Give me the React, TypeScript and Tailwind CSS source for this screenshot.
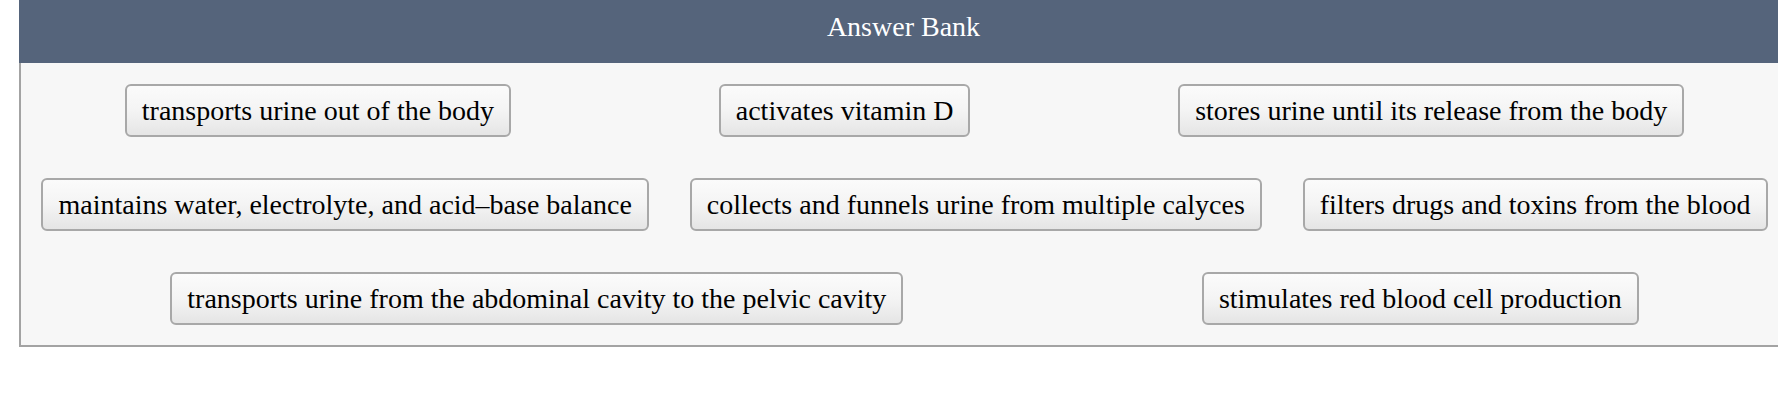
const rows: string[][] = [
  [
    "transports urine out of the body",
    "activates vitamin D",
    "stores urine until its release from the body",
  ],
  [
    "maintains water, electrolyte, and acid–base balance",
    "collects and funnels urine from multiple calyces",
    "filters drugs and toxins from the blood",
  ],
  [
    "transports urine from the abdominal cavity to the pelvic cavity",
    "stimulates red blood cell production",
  ],
];

function AnswerChip({ label }: { label: string }) {
  return (
    <div
      className="
        mx-[20px] h-[53px] px-[15px]
        flex items-center whitespace-nowrap
        border-2 border-[#a8a8a8] rounded-[6px]
        bg-linear-to-b from-[#fbfbfb] via-[#f4f4f4] to-[#e5e5e5]
        text-black text-[28px] leading-none
      "
    >
      {label}
    </div>
  );
}

export default function App() {
  return (
    <div className="w-[1778px] h-[404px] overflow-hidden bg-white font-['Liberation_Serif','Times_New_Roman',serif]">
      <div className="ml-[19px] w-[1771px] border-2 border-t-0 border-[#a3a3a3] bg-[#f7f7f7]">
        {/* header */}
        <div className="h-[63px] pb-[9px] flex items-center justify-center bg-[#55647b] text-white text-[28px] -ml-[2px]">
          Answer Bank
        </div>

        <div className="flex flex-col gap-[41px] pt-[21px] pb-[20px]">
          {rows.map((row, i) => (
            <div key={i} className="flex flex-row justify-around">
              {row.map((label) => (
                <AnswerChip key={label} label={label} />
              ))}
            </div>
          ))}
        </div>
      </div>
    </div>
  );
}
